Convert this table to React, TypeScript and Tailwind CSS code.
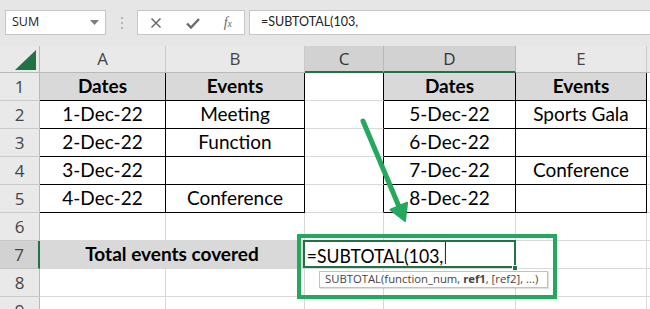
import { Fragment } from 'react';

type Cell = { text?: string; bold?: boolean };

const COLS = ['A', 'B', 'C', 'D', 'E'];

const ROWS: Cell[][] = [
  [{ text: 'Dates', bold: true }, { text: 'Events', bold: true }, {}, { text: 'Dates', bold: true }, { text: 'Events', bold: true }],
  [{ text: '1-Dec-22' }, { text: 'Meeting' }, {}, { text: '5-Dec-22' }, { text: 'Sports Gala' }],
  [{ text: '2-Dec-22' }, { text: 'Function' }, {}, { text: '6-Dec-22' }, {}],
  [{ text: '3-Dec-22' }, {}, {}, { text: '7-Dec-22' }, { text: 'Conference' }],
  [{ text: '4-Dec-22' }, { text: 'Conference' }, {}, { text: '8-Dec-22' }, {}],
  [{}, {}, {}, {}, {}],
];

// row/col are 1-based row numbers and 0-based column index (A = 0)
function cellClass(row: number, col: number) {
  const inTable = row >= 1 && row <= 5 && col !== 2 && col < 5;
  const leftOfTable = row >= 1 && row <= 5 && col === 2;
  const right = inTable || leftOfTable ? 'border-r-black' : 'border-r-[#d9d9d9]';
  const bottom = inTable ? 'border-b-black' : 'border-b-[#d9d9d9]';
  const fill = inTable && row === 1 ? 'bg-[#d9d9d9] font-bold' : 'bg-white';
  return `flex items-center justify-center border-r border-b ${right} ${bottom} ${fill}`;
}

function RowHeader({ n, active }: { n: number; active?: boolean }) {
  return (
    <div
      className={
        active
          ? 'flex items-center justify-center bg-[#d2d2d2] border-b border-b-[#c4c4c4] border-r-2 border-r-[#217346] text-[#444] text-[17px] font-["Open_Sans",sans-serif]'
          : 'flex items-center justify-center bg-[#e9e9e9] border-b border-b-[#c9c9c9] border-r border-r-[#b9b9b9] text-[#444] text-[17px] font-["Open_Sans",sans-serif]'
      }
    >
      {n}
    </div>
  );
}

function FormulaBar() {
  return (
    <div className="flex items-start h-[46px] pt-[10px] bg-[#e6e6e6] font-['Open_Sans',sans-serif]">
      <div className="ml-[5px] w-[101px] h-[25px] bg-white border border-[#c6c6c6] flex items-center justify-between pl-[6px] pr-[6px]">
        <span className="text-[12.5px] text-[#222]">SUM</span>
        <svg width="9" height="5" viewBox="0 0 9 5">
          <path d="M0 0h9L4.5 5z" fill="#7c7c7c" />
        </svg>
      </div>
      <div className="w-[31px] h-[25px] flex flex-col items-center justify-center gap-[3px]">
        <span className="w-[2px] h-[2px] bg-[#b4b4b4]" />
        <span className="w-[2px] h-[2px] bg-[#b4b4b4]" />
        <span className="w-[2px] h-[2px] bg-[#b4b4b4]" />
      </div>
      <div className="w-[108px] h-[25px] bg-white border border-[#c6c6c6] flex items-center justify-around">
        <svg width="12" height="12" viewBox="0 0 12 12">
          <path d="M1.5 1.5l9 9M10.5 1.5l-9 9" stroke="#6a6a6a" strokeWidth="1.5" fill="none" />
        </svg>
        <svg width="14" height="12" viewBox="0 0 14 12">
          <path d="M1 6.5l4 4L13 2" stroke="#6a6a6a" strokeWidth="2.4" fill="none" />
        </svg>
        <span className="italic text-[#6a6a6a] font-['Liberation_Serif',serif] text-[14px] leading-none">
          f<span className="text-[10px]">x</span>
        </span>
      </div>
      <div className="ml-[4px] flex-1 h-[25px] bg-white border border-r-0 border-[#c6c6c6] flex items-center pl-[11px]">
        <span className="text-[12.5px] text-[#222] font-['Lato',sans-serif]">=SUBTOTAL(103,</span>
      </div>
    </div>
  );
}

export default function App() {
  return (
    <div className="relative w-[650px] h-[309px] overflow-hidden bg-white">
      <FormulaBar />

      <div className="grid grid-cols-[40px_126px_139px_79px_132px_131px_1fr] grid-rows-[27px_repeat(9,28px)] font-['Lato',sans-serif] text-[19px] text-black">
        {/* corner + column letters */}
        <div className="relative bg-[#e9e9e9] border-r border-b border-[#b9b9b9]">
          <svg className="absolute left-[15px] top-[4px]" width="21" height="20" viewBox="0 0 21 20">
            <path d="M21 0V20H0z" fill="#217346" />
          </svg>
        </div>
        {COLS.map((c) => (
          <div
            key={c}
            className={
              c === 'C' || c === 'D'
                ? 'flex items-center justify-center bg-[#d2d2d2] border-r border-r-[#b9b9b9] border-b-2 border-b-[#217346] text-[#333] text-[17px] font-["Open_Sans",sans-serif]'
                : 'flex items-center justify-center bg-[#e9e9e9] border-r border-r-[#c9c9c9] border-b border-b-[#b9b9b9] text-[#444] text-[17px] font-["Open_Sans",sans-serif]'
            }
          >
            {c}
          </div>
        ))}
        <div className="bg-[#e9e9e9] border-b border-[#b9b9b9]" />

        {/* rows 1 - 6 */}
        {ROWS.map((cells, i) => (
          <Fragment key={i}>
            <RowHeader n={i + 1} />
            {cells.map((cell, j) => (
              <div key={j} className={cellClass(i + 1, j)}>
                {cell.text}
              </div>
            ))}
            <div className="border-b border-[#d9d9d9]" />
          </Fragment>
        ))}

        {/* row 7 with the formula being typed */}
        <RowHeader n={7} active />
        <div className="col-span-2 flex items-center justify-center bg-[#d9d9d9] border-r border-b border-[#d9d9d9] font-bold">
          Total events covered
        </div>
        <div className="relative col-span-2 flex items-center border-r border-b border-[#d9d9d9] bg-white">
          <div className="absolute -left-[2px] -top-[1px] -right-[1px] bottom-0 border-2 border-[#217346]" />
          <span className="relative inline-block pl-[2px] text-[20px] leading-none origin-left scale-x-[0.88] whitespace-nowrap">
            =SUBTOTAL(103,
            {/* text cursor */}
            <span className="absolute left-full ml-[2px] -top-[3px] w-[1px] h-[22px] bg-black" />
          </span>
          <span className="absolute -right-[3px] -bottom-[3px] w-[6px] h-[6px] bg-[#217346] border border-white" />
        </div>
        <div className="border-r border-b border-[#d9d9d9]" />
        <div className="border-b border-[#d9d9d9]" />

        {/* rows 8 - 9 */}
        {[8, 9].map((n) => (
          <Fragment key={n}>
            <RowHeader n={n} />
            {COLS.map((c) => (
              <div key={c} className="border-r border-b border-[#d9d9d9]" />
            ))}
            <div className="border-b border-[#d9d9d9]" />
          </Fragment>
        ))}
      </div>

      {/* argument hint under the edited cell */}
      <div className="absolute left-[319px] top-[271px] w-[229px] h-[17px] bg-white border border-[#c2c2c2] shadow-[1px_1px_1px_rgba(0,0,0,0.12)] flex items-center pl-[5px] text-[11.3px] text-[#444] font-['Open_Sans',sans-serif] whitespace-pre">
        SUBTOTAL(function_num, <b>ref1</b>, [ref2], ...)
      </div>

      {/* callout box around the formula */}
      <div className="absolute left-[297px] top-[234px] w-[260px] h-[65px] border-4 border-[#24a85c]" />

      {/* pointer arrow */}
      <svg className="absolute left-0 top-0 pointer-events-none" width="650" height="309" viewBox="0 0 650 309">
        <line x1="363" y1="121" x2="400" y2="209" stroke="#24a85c" strokeWidth="5" strokeLinecap="round" />
        <path d="M405 221L390.5 209.7L407.1 202.7z" fill="#24a85c" stroke="#24a85c" strokeWidth="2" strokeLinejoin="round" />
      </svg>
    </div>
  );
}
